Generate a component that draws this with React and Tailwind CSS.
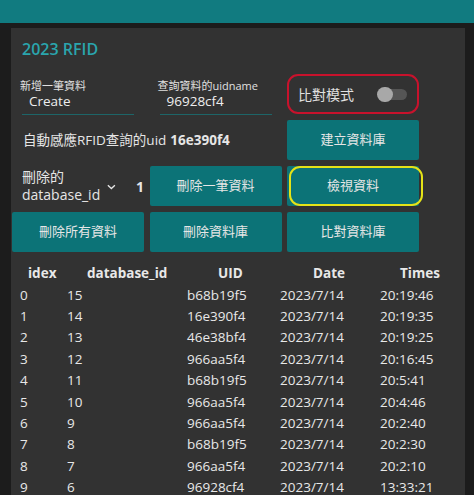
import React from 'react'

const FONT = { fontFamily: '"Open Sans", "Noto Sans CJK TC", sans-serif' }

const rows = [
  ['0', '15', 'b68b19f5', '2023/7/14', '20:19:46'],
  ['1', '14', '16e390f4', '2023/7/14', '20:19:35'],
  ['2', '13', '46e38bf4', '2023/7/14', '20:19:25'],
  ['3', '12', '966aa5f4', '2023/7/14', '20:16:45'],
  ['4', '11', 'b68b19f5', '2023/7/14', '20:5:41'],
  ['5', '10', '966aa5f4', '2023/7/14', '20:4:46'],
  ['6', '9', '966aa5f4', '2023/7/14', '20:2:40'],
  ['7', '8', 'b68b19f5', '2023/7/14', '20:2:30'],
  ['8', '7', '966aa5f4', '2023/7/14', '20:2:10'],
  ['9', '6', '96928cf4', '2023/7/14', '13:33:21'],
]

const Btn = ({ children }) => (
  <div className="h-[40px] bg-[#0c7377] rounded-[2px] flex items-center justify-center text-[13px] text-[#e6e6e6]">
    {children}
  </div>
)

const Field = ({ label, value }) => (
  <div className="pl-[8px] pr-[10px] pt-[5px]">
    <div className="text-[11px] leading-[14px] text-[#e0e0e0]">{label}</div>
    <div className="pl-[9px] text-[13.5px] leading-[17px] text-[#eeeeee]">{value}</div>
    <div className="mt-[4px] ml-[2px] h-[1px] bg-[#1d6568]"></div>
  </div>
)

const App = () => {
  return (
    <div style={FONT} className="w-[474px] h-[495px] bg-[#1c1c1c] overflow-hidden">
      <div className="h-[23px] bg-[#117b80]"></div>
      <div className="pt-[5px] pl-[11px] pr-[9px]">
        <div className="bg-[#323232] h-[470px] overflow-hidden">
          <div className="pl-[11px] pt-[9px] text-[16px] font-semibold text-[#2aa5ad] leading-[24px]">2023 RFID</div>

          <div className="pl-[1px] mt-[13px] grid grid-cols-[132px_132px_132px] gap-x-[5.5px]">
            <Field label="新增一筆資料" value="Create" />
            <Field label="查詢資料的uidname" value="96928cf4" />
            <div className="h-[40px] border-2 border-[#c8122c] rounded-[11px] flex items-center pl-[9px] pr-[10px]">
              <span className="text-[14px] text-[#e0e0e0]">比對模式</span>
              <div className="ml-auto relative w-[30px] h-[15px] flex items-center">
                <div className="absolute left-[2px] right-0 h-[11px] rounded-full bg-[#555555]"></div>
                <div className="absolute left-0 w-[16px] h-[15px] rounded-full bg-[#a8a8a8]"></div>
              </div>
            </div>
          </div>

          <div className="pl-[1px] mt-[5px] grid grid-cols-[132px_132px_132px] gap-x-[5.5px] gap-y-[6px]">
            <div className="col-span-2 h-[40px] flex items-center pl-[11px] text-[13.5px] text-[#e6e6e6]">
              自動感應RFID查詢的uid <span className="ml-[4px] font-bold">16e390f4</span>
            </div>
            <Btn>建立資料庫</Btn>

            <div className="h-[40px] flex items-center pl-[10px] text-[14px] text-[#e6e6e6]">
              <div className="leading-[18px]">
                <div>刪除的</div>
                <div>database_id</div>
              </div>
              <svg className="ml-[7px] mt-[2px]" width="12" height="8" viewBox="0 0 12 8" fill="none">
                <path d="M1.2 1.5l4.8 4.6 4.8-4.6" stroke="#e6e6e6" strokeWidth="1.8" />
              </svg>
              <span className="ml-[20px] font-bold">1</span>
            </div>
            <Btn>刪除一筆資料</Btn>
            <div className="relative">
              <Btn>檢視資料</Btn>
              <div className="absolute left-[2px] -right-[4px] top-0 bottom-0 border-2 border-[#e5e317] rounded-[11px]"></div>
            </div>

            <Btn>刪除所有資料</Btn>
            <Btn>刪除資料庫</Btn>
            <Btn>比對資料庫</Btn>
          </div>

          <div className="mt-[10px] text-[#e8e8e8]">
            <div className="grid grid-cols-[47px_120px_93px_100px_1fr] pl-[9px] h-[22px] items-center text-[13.5px] font-bold">
              <div className="pl-[8px]">idex</div>
              <div className="pl-[20px]">database_id</div>
              <div className="pl-[31px]">UID</div>
              <div className="pl-[33px]">Date</div>
              <div className="pl-[20px]">Times</div>
            </div>
            {rows.map((r) => (
              <div key={r[0]} className="grid grid-cols-[47px_120px_93px_100px_1fr] pl-[9px] h-[21.4px] items-center text-[13.5px]">
                {r.map((c, i) => (
                  <div key={i}>{c}</div>
                ))}
              </div>
            ))}
          </div>
        </div>
      </div>
    </div>
  )
}

export default App
